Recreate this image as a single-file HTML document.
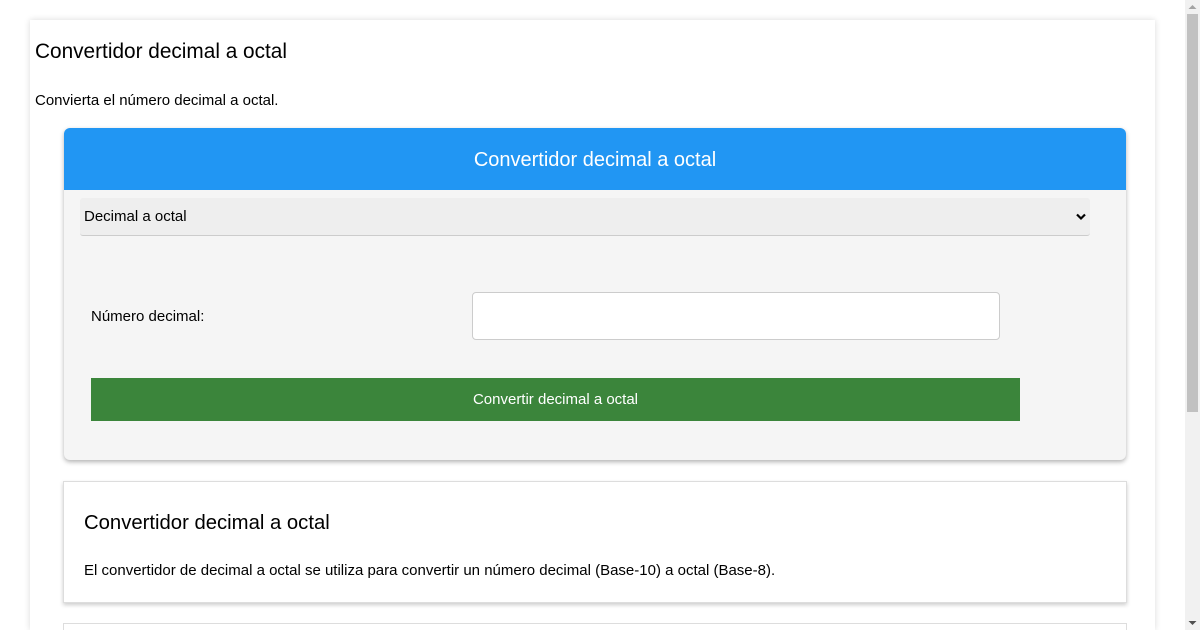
<!DOCTYPE html>
<html style="overflow:hidden;height:630px"><head><style>
*{box-sizing:border-box;margin:0;padding:0}
body{width:1200px;height:630px;overflow:hidden;background:#fff;font-family:"Liberation Sans",Arial,sans-serif;position:relative;color:#000}
.a{position:absolute}
.sb{left:1185px;top:0;width:15px;height:630px;background:#f1f1f1}
.th{left:1187px;top:14px;width:11px;height:398px;background:#c1c1c1}
</style></head><body>
<div class="a" style="left:30px;top:20px;width:1125px;height:610px;background:#fff;box-shadow:0 0 6px rgba(0,0,0,.15)"></div>
<div class="a" style="left:35px;top:40px;font-size:20.8px">Convertidor decimal a octal</div>
<div class="a" style="left:35px;top:92px;font-size:15px">Convierta el número decimal a octal.</div>
<div class="a" style="left:64px;top:128px;width:1062px;height:332px;background:#f5f5f5;border-radius:6px;box-shadow:0 2px 5px rgba(0,0,0,.3);overflow:hidden">
 <div style="height:62px;background:#2196f3;color:#fff;font-size:20px;text-align:center;line-height:64px">Convertidor decimal a octal</div>
</div>
<div class="a" style="left:80px;top:198px;width:1010px;height:38px;background:#eee;border-bottom:1px solid #ccc;border-radius:3px;font-size:15px;line-height:38px;padding-left:4px">Decimal a octal
 <svg class="a" style="right:4px;top:15px" width="10" height="8" viewBox="0 0 10 8"><path d="M1 1.5L5 5.5L9 1.5" stroke="#000" stroke-width="2.2" fill="none"/></svg></div>
<div class="a" style="left:91px;top:308px;font-size:15px">Número decimal:</div>
<div class="a" style="left:472px;top:292px;width:528px;height:48px;background:#fff;border:1px solid #ccc;border-radius:4px"></div>
<div class="a" style="left:91px;top:378px;width:929px;height:43px;background:#3b853b;color:#fff;font-size:15px;text-align:center;line-height:44px">Convertir decimal a octal</div>
<div class="a" style="left:63px;top:481px;width:1064px;height:122px;background:#fff;border:1px solid #ddd;box-shadow:0 2px 4px rgba(0,0,0,.2)"></div>
<div class="a" style="left:84px;top:512px;font-size:20.3px">Convertidor decimal a octal</div>
<div class="a" style="left:84px;top:562px;font-size:15px">El convertidor de decimal a octal se utiliza para convertir un número decimal (Base-10) a octal (Base-8).</div>
<div class="a" style="left:63px;top:623px;width:1064px;height:7px;background:#fff;border:1px solid #ddd;border-bottom:none"></div>
<div class="a sb"></div><div class="a th"></div>
<svg class="a" style="left:1188px;top:4px" width="9" height="6"><path d="M0.5 5L4.5 1L8.5 5Z" fill="#a3a3a3"/></svg>
<svg class="a" style="left:1188px;top:620px" width="9" height="6"><path d="M0.5 1L4.5 5L8.5 1Z" fill="#505050"/></svg>
</body></html>
